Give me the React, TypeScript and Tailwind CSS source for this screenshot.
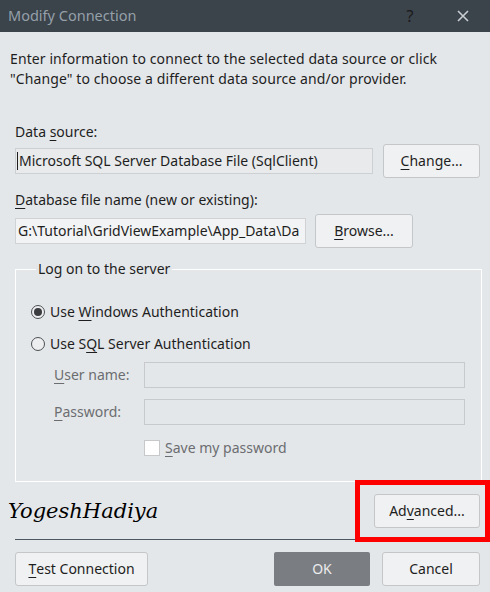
import type { ReactNode } from 'react'

const font = { fontFamily: '"Noto Sans", "Open Sans", sans-serif' }

function Key({ children }: { children: ReactNode }) {
  return <span className="underline underline-offset-[3px] decoration-1">{children}</span>
}

function Button({
  children,
  className = '',
}: {
  children: ReactNode
  className?: string
}) {
  return (
    <button
      className={`h-[34px] flex-shrink-0 flex items-center justify-center rounded-[3px] border border-[#c4c6c8] bg-[#f0f1f2] text-[14px] text-[#1e1e1e] ${className}`}
    >
      {children}
    </button>
  )
}

function Radio({ checked, children }: { checked?: boolean; children: ReactNode }) {
  return (
    <div className="flex items-center h-[20px]">
      <span className="w-[14px] h-[14px] rounded-full border border-[#4d4f52] bg-[#eceef0] flex items-center justify-center">
        {checked && <span className="w-[8px] h-[8px] rounded-full bg-[#3a3c3f]" />}
      </span>
      <span className="ml-[5px]">{children}</span>
    </div>
  )
}

export default function App() {
  return (
    <div
      className="relative w-[490px] h-[592px] overflow-hidden bg-[#e4e7ea] text-[#1e1e1e] flex flex-col"
      style={font}
    >
      {/* Title bar */}
      <div className="h-[32px] flex-shrink-0 bg-[#3b434b] flex items-center pl-[8px]">
        <span className="text-[14.5px] text-[#95a0a9] flex-1">Modify Connection</span>
        <span className="text-[16px] text-[#1a1a1a] w-[20px] text-center mr-[36px]">?</span>
        <svg width="14" height="14" viewBox="0 0 14 14" className="mr-[20px]">
          <path d="M2 2 L12 12 M12 2 L2 12" stroke="#c9ced2" strokeWidth="1.6" />
        </svg>
      </div>

      <div className="pl-[15px] pr-[8px] flex flex-col text-[14px] leading-[20px]">
        <p className="mt-[17px] -ml-[5px] tracking-[0.1px]">
          Enter information to connect to the selected data source or click
          <br />
          "Change" to choose a different data source and/or provider.
        </p>

        <div className="mt-[33px]">
          Data <Key>s</Key>ource:
        </div>
        <div className="mt-[2px] flex items-center">
          <div className="w-[358px] flex-shrink-0 h-[26px] border border-[#cdd0d3] bg-[#e8eaec] flex items-center pl-[1px] whitespace-nowrap overflow-hidden">
            <span className="w-[1px] h-[18px] bg-[#1e1e1e] mr-[1px]" />
            Microsoft SQL Server Database File (SqlClient)
          </div>
          <Button className="ml-[10px] w-[97px]">
            <Key>C</Key>hange...
          </Button>
        </div>

        <div className="mt-[12px]">
          <Key>D</Key>atabase file name (new or existing):
        </div>
        <div className="mt-[4px] flex items-center">
          <div className="w-[291px] flex-shrink-0 h-[26px] border border-[#d0d2d4] bg-[#f2f3f4] flex items-center pl-[2px] overflow-hidden">
            <span className="block w-[286px] overflow-hidden whitespace-nowrap">
              G:\Tutorial\GridViewExample\App_Data\Da
            </span>
          </div>
          <Button className="ml-[9px] w-[98px]">
            <Key>B</Key>rowse...
          </Button>
        </div>

        {/* Log on group */}
        <fieldset className="mt-[11px] w-[467px] border border-white pl-[15px] pr-[15px] pt-[23px] pb-[23px]">
          <legend className="ml-[5px] px-[2px]">Log on to the server</legend>
          <Radio checked>
            Use <Key>W</Key>indows Authentication
          </Radio>
          <div className="mt-[12px]">
            <Radio>
              Use S<Key>Q</Key>L Server Authentication
            </Radio>
          </div>
          <div className="mt-[8px] flex items-center text-[#6b6d70]">
            <span className="ml-[23px] w-[90px]">
              <Key>U</Key>ser name:
            </span>
            <div className="w-[321px] h-[26px] border border-[#c8c9ca] bg-[#e4e7ea]" />
          </div>
          <div className="mt-[11px] flex items-center text-[#6b6d70]">
            <span className="ml-[23px] w-[90px]">
              <Key>P</Key>assword:
            </span>
            <div className="w-[321px] h-[26px] border border-[#c8c9ca] bg-[#e4e7ea]" />
          </div>
          <div className="mt-[13px] flex items-center h-[20px] text-[#6b6d70]">
            <span className="ml-[113px] w-[16px] h-[16px] border border-[#c6c8ca] bg-white" />
            <span className="ml-[5px]">
              <Key>S</Key>ave my password
            </span>
          </div>
        </fieldset>

        <div className="mt-[12px] flex items-center justify-between">
          <span
            className="-ml-[7px] text-[21px] italic text-black"
            style={{ fontFamily: '"DejaVu Serif", "Liberation Serif", serif' }}
          >
            YogeshHadiya
          </span>
          <Button className="w-[106px] mr-[2px]">
            Ad<Key>v</Key>anced...
          </Button>
        </div>

        <div className="mt-[11px] h-[1px] bg-[#4b5661] w-[467px]" />

        <div className="mt-[12px] flex items-center">
          <Button className="w-[133px]">
            <Key>T</Key>est Connection
          </Button>
          <button className="ml-auto h-[34px] w-[96px] rounded-[2px] bg-[#7a7e83] text-[14px] text-[#ececec]">
            OK
          </button>
          <Button className="ml-[12px] w-[98px] mr-[2px]">Cancel</Button>
        </div>
      </div>

      {/* annotation */}
      <div className="absolute left-[355px] top-[480px] w-[135px] h-[62px] border-[5px] border-[#ff0000]" />
    </div>
  )
}
